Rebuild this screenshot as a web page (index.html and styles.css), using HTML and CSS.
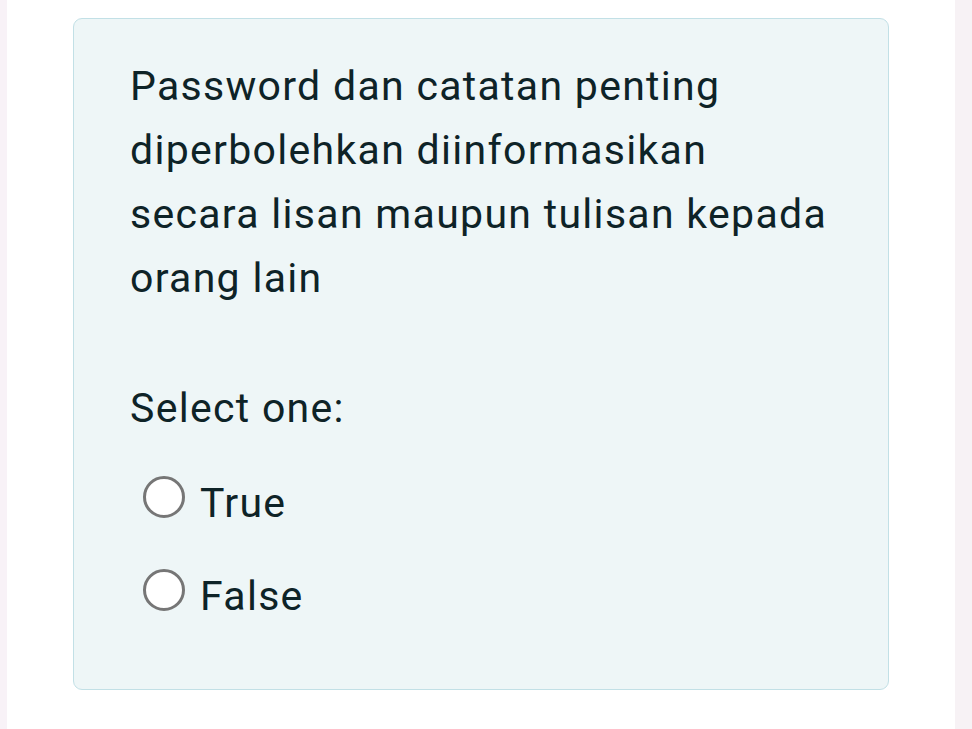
FILE: index.html
```html
<!DOCTYPE html>
<html lang="id">
<head>
<meta charset="utf-8">
<title>Question</title>
<link rel="stylesheet" href="styles.css">
</head>
<body>
<div class="page">
  <div class="strip strip-left"></div>
  <main class="main">
    <div class="card">
      <p class="qtext">Password dan catatan penting diperbolehkan diinformasikan secara lisan maupun tulisan kepada orang lain</p>
      <p class="prompt">Select one:</p>
      <div class="answers">
        <label class="option"><span class="radio"></span><span class="label">True</span></label>
        <label class="option"><span class="radio"></span><span class="label">False</span></label>
      </div>
    </div>
  </main>
  <div class="strip strip-right"></div>
</div>
</body>
</html>
```
FILE: styles.css
```css
html, body {
  margin: 0;
  padding: 0;
  background: #ffffff;
}
body {
  font-family: Roboto, "Liberation Sans", sans-serif;
  color: #0e2327;
}
.page {
  display: flex;
  width: 972px;
  height: 729px;
}
.strip-left {
  width: 7px;
  background: #f8f2f7;
}
.strip-right {
  width: 17px;
  background: #f7f2f5;
}
.main {
  flex: 1;
  padding: 18px 66px 0 66px;
}
.card {
  background: #eef6f7;
  border: 1px solid #c2e0e6;
  border-radius: 9px;
  padding: 35px 50px 61px 56px;
  height: 672px;
  box-sizing: border-box;
}
.qtext, .prompt, .option {
  font-size: 41px;
  line-height: 64px;
  letter-spacing: 1.3px;
}
.qtext {
  margin: 0 0 66px 0;
}
.prompt {
  margin: 0 0 31px 0;
}
.answers {
  display: flex;
  flex-direction: column;
  gap: 29px;
}
.option {
  display: flex;
  align-items: flex-start;
  padding-left: 13px;
}
.radio {
  width: 42px;
  height: 42px;
  box-sizing: border-box;
  border: 3px solid #767676;
  border-radius: 50%;
  background: #ffffff;
  margin-top: 5px;
  margin-right: 15px;
  flex: none;
}
```
